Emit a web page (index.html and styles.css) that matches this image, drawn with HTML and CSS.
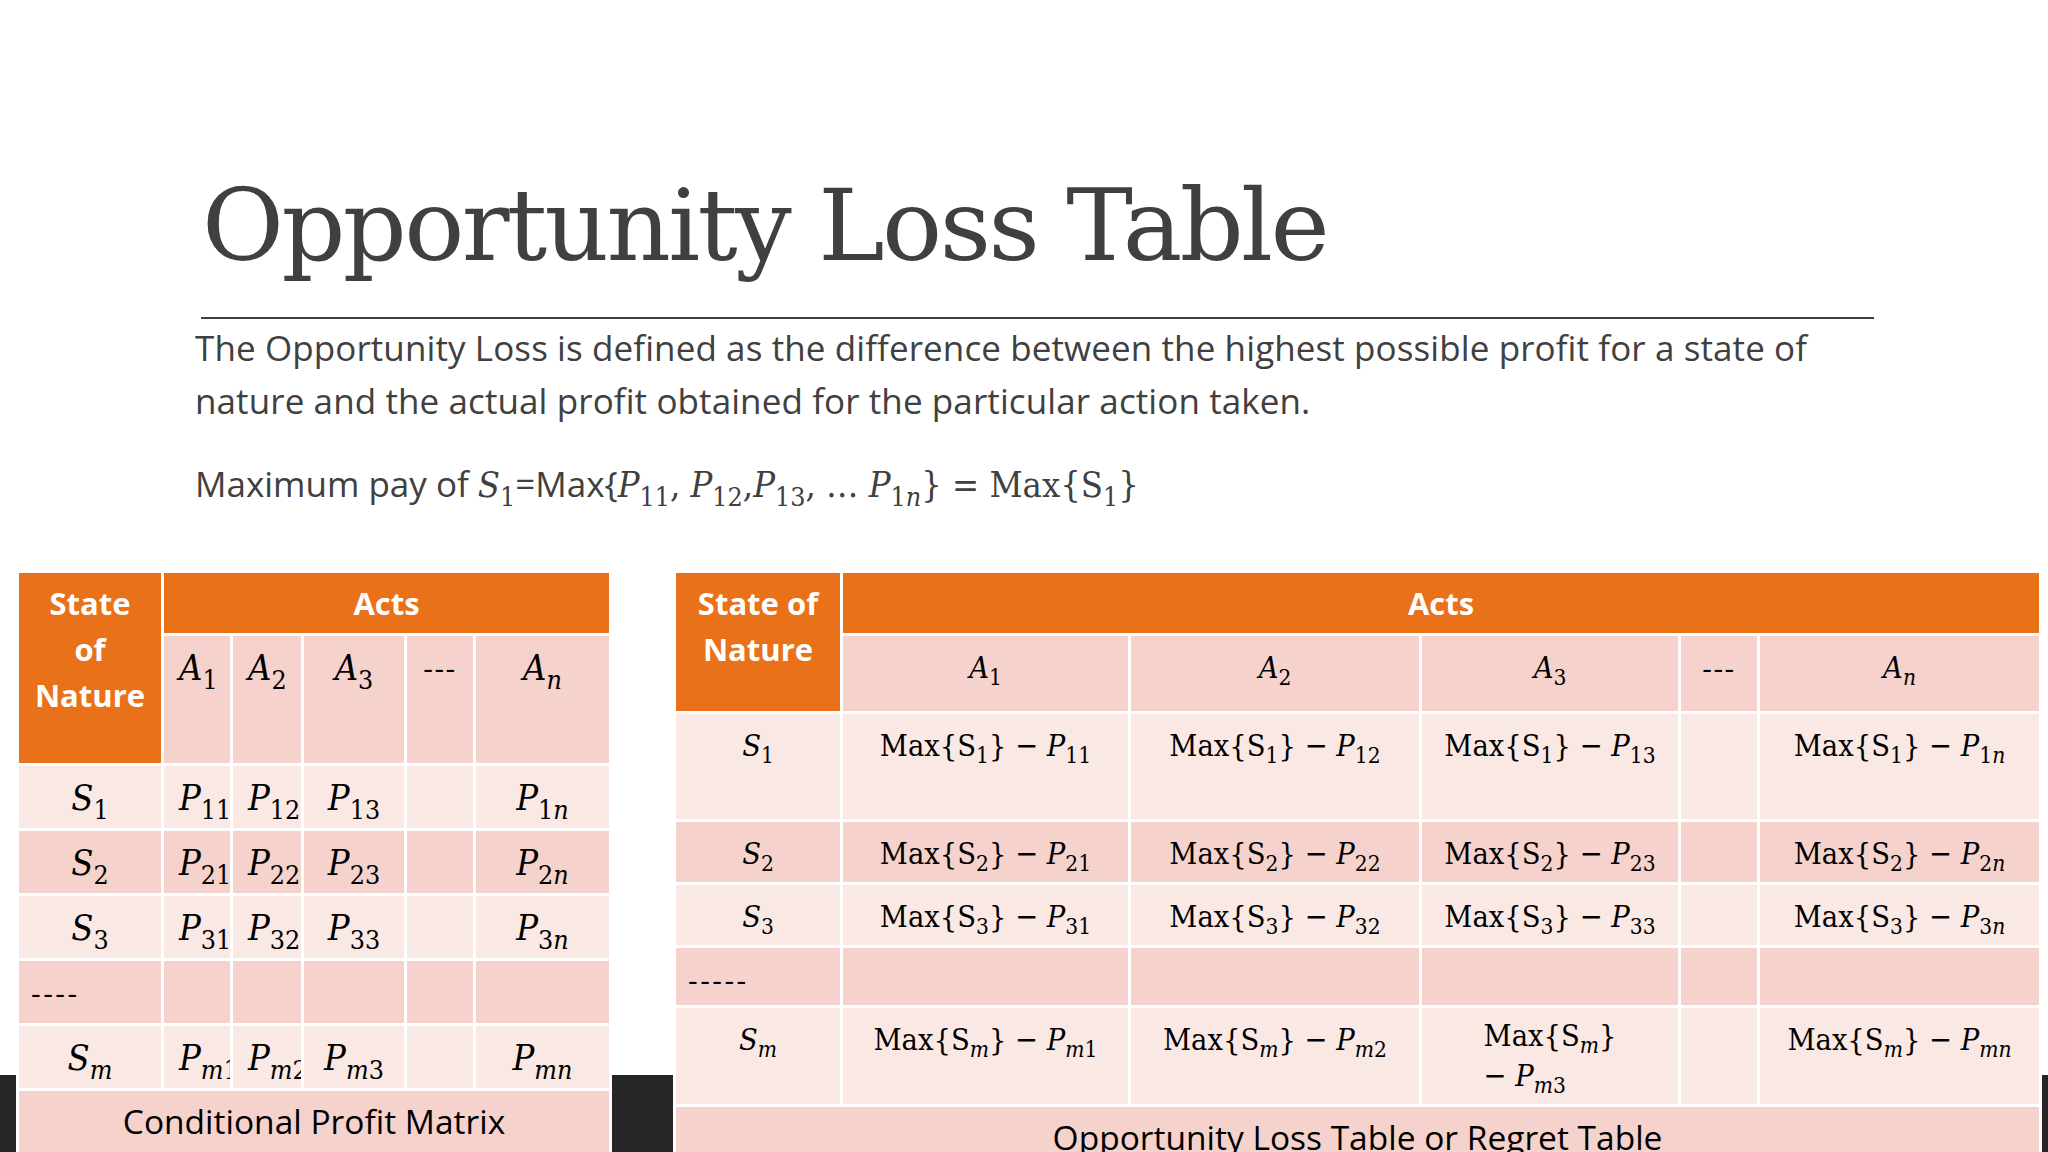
FILE: index.html
```html
<!DOCTYPE html>
<html lang="en">
<head>
<meta charset="utf-8">
<title>Opportunity Loss Table</title>
<link rel="stylesheet" href="styles.css">
</head>
<body>
<div class="slide">
  <div class="footer-bar"></div>
  <div class="top">
    <h1 class="title">Opportunity Loss Table</h1>
    <div class="rule"></div>
    <p class="para">The Opportunity Loss is defined as the difference between the highest possible profit for a state of nature and the actual profit obtained for the particular action taken.</p>
    <p class="formula">Maximum pay of <span class="m"><i>S</i><sub>1</sub></span>=Max{<span class="m"><i>P</i><sub>11</sub>, <i>P</i><sub>12</sub>,<i>P</i><sub>13</sub>, … <i>P</i><sub>1<i>n</i></sub>} = Max{S<sub>1</sub>}</span></p>
  </div>

  <div class="tables">
    <div class="tbl-wrap left-wrap">
      <div class="grid left-grid">
        <div class="c hd state">State<br>of<br>Nature</div>
        <div class="c hd acts">Acts</div>
        <div class="c dk m"><i>A</i><sub>1</sub></div>
        <div class="c dk m"><i>A</i><sub>2</sub></div>
        <div class="c dk m"><i>A</i><sub>3</sub></div>
        <div class="c dk dash">---</div>
        <div class="c dk m"><i>A</i><sub><i>n</i></sub></div>

        <div class="c lt m"><i>S</i><sub>1</sub></div>
        <div class="c lt m"><i>P</i><sub>11</sub></div>
        <div class="c lt m"><i>P</i><sub>12</sub></div>
        <div class="c lt m"><i>P</i><sub>13</sub></div>
        <div class="c lt"></div>
        <div class="c lt m"><i>P</i><sub>1<i>n</i></sub></div>

        <div class="c dk m"><i>S</i><sub>2</sub></div>
        <div class="c dk m"><i>P</i><sub>21</sub></div>
        <div class="c dk m"><i>P</i><sub>22</sub></div>
        <div class="c dk m"><i>P</i><sub>23</sub></div>
        <div class="c dk"></div>
        <div class="c dk m"><i>P</i><sub>2<i>n</i></sub></div>

        <div class="c lt m"><i>S</i><sub>3</sub></div>
        <div class="c lt m"><i>P</i><sub>31</sub></div>
        <div class="c lt m"><i>P</i><sub>32</sub></div>
        <div class="c lt m"><i>P</i><sub>33</sub></div>
        <div class="c lt"></div>
        <div class="c lt m"><i>P</i><sub>3<i>n</i></sub></div>

        <div class="c dk dots">----</div>
        <div class="c dk"></div>
        <div class="c dk"></div>
        <div class="c dk"></div>
        <div class="c dk"></div>
        <div class="c dk"></div>

        <div class="c lt m"><i>S</i><sub><i>m</i></sub></div>
        <div class="c lt m"><i>P</i><sub><i>m</i>1</sub></div>
        <div class="c lt m"><i>P</i><sub><i>m</i>2</sub></div>
        <div class="c lt m"><i>P</i><sub><i>m</i>3</sub></div>
        <div class="c lt"></div>
        <div class="c lt m"><i>P</i><sub><i>mn</i></sub></div>

        <div class="c dk caption">Conditional Profit Matrix</div>
      </div>
    </div>

    <div class="tbl-wrap right-wrap">
      <div class="grid right-grid">
        <div class="c hd state">State of<br>Nature</div>
        <div class="c hd acts">Acts</div>
        <div class="c dk m"><i>A</i><sub>1</sub></div>
        <div class="c dk m"><i>A</i><sub>2</sub></div>
        <div class="c dk m"><i>A</i><sub>3</sub></div>
        <div class="c dk dash">---</div>
        <div class="c dk m"><i>A</i><sub><i>n</i></sub></div>

        <div class="c lt m"><i>S</i><sub>1</sub></div>
        <div class="c lt m">Max{S<sub>1</sub>} − <i>P</i><sub>11</sub></div>
        <div class="c lt m">Max{S<sub>1</sub>} − <i>P</i><sub>12</sub></div>
        <div class="c lt m">Max{S<sub>1</sub>} − <i>P</i><sub>13</sub></div>
        <div class="c lt"></div>
        <div class="c lt m">Max{S<sub>1</sub>} − <i>P</i><sub>1<i>n</i></sub></div>

        <div class="c dk m"><i>S</i><sub>2</sub></div>
        <div class="c dk m">Max{S<sub>2</sub>} − <i>P</i><sub>21</sub></div>
        <div class="c dk m">Max{S<sub>2</sub>} − <i>P</i><sub>22</sub></div>
        <div class="c dk m">Max{S<sub>2</sub>} − <i>P</i><sub>23</sub></div>
        <div class="c dk"></div>
        <div class="c dk m">Max{S<sub>2</sub>} − <i>P</i><sub>2<i>n</i></sub></div>

        <div class="c lt m"><i>S</i><sub>3</sub></div>
        <div class="c lt m">Max{S<sub>3</sub>} − <i>P</i><sub>31</sub></div>
        <div class="c lt m">Max{S<sub>3</sub>} − <i>P</i><sub>32</sub></div>
        <div class="c lt m">Max{S<sub>3</sub>} − <i>P</i><sub>33</sub></div>
        <div class="c lt"></div>
        <div class="c lt m">Max{S<sub>3</sub>} − <i>P</i><sub>3<i>n</i></sub></div>

        <div class="c dk dots">-----</div>
        <div class="c dk"></div>
        <div class="c dk"></div>
        <div class="c dk"></div>
        <div class="c dk"></div>
        <div class="c dk"></div>

        <div class="c lt m"><i>S</i><sub><i>m</i></sub></div>
        <div class="c lt m">Max{S<sub><i>m</i></sub>} − <i>P</i><sub><i>m</i>1</sub></div>
        <div class="c lt m">Max{S<sub><i>m</i></sub>} − <i>P</i><sub><i>m</i>2</sub></div>
        <div class="c lt m"><span class="wrap2">Max{S<sub><i>m</i></sub>}<br>− <i>P</i><sub><i>m</i>3</sub></span></div>
        <div class="c lt"></div>
        <div class="c lt m">Max{S<sub><i>m</i></sub>} − <i>P</i><sub><i>mn</i></sub></div>

        <div class="c dk caption">Opportunity Loss Table or Regret Table</div>
      </div>
    </div>
  </div>
</div>
</body>
</html>
```

FILE: styles.css
```css
html, body {
  margin: 0;
  padding: 0;
  background: #ffffff;
}

.slide {
  position: relative;
  width: 2048px;
  height: 1152px;
  overflow: hidden;
  background: #ffffff;
  font-family: "Open Sans", "Liberation Sans", sans-serif;
}

.footer-bar {
  position: absolute;
  left: 0;
  right: 0;
  bottom: 0;
  height: 77px;
  background: #262626;
  z-index: 0;
}

.top {
  box-sizing: border-box;
  height: 570px;
  padding: 176px 0 0 195px;
  color: #404040;
}

.title {
  margin: 0 0 0 7px;
  font-family: "DejaVu Serif", "Liberation Serif", serif;
  font-weight: normal;
  font-size: 100px;
  line-height: 100px;
  letter-spacing: -2.6px;
  color: #404040;
  white-space: nowrap;
}

.rule {
  margin: 41px 0 0 6px;
  width: 1673px;
  height: 2px;
  background: #404040;
}

.para {
  margin: 2px 0 0 0;
  width: 1720px;
  font-size: 35px;
  letter-spacing: 0.1px;
  line-height: 53px;
}

.formula {
  margin: 30px 0 0 0;
  font-size: 35px;
  line-height: 53px;
  white-space: nowrap;
}

.m {
  font-family: "DejaVu Serif Condensed", "DejaVu Serif", "Liberation Serif", serif;
  font-stretch: condensed;
}

.formula .m {
  font-size: 36px;
}

.m i {
  font-style: italic;
}

sub {
  font-size: 0.74em;
  vertical-align: -0.32em;
  line-height: 0;
}

.tables {
  position: relative;
  z-index: 1;
  display: flex;
  align-items: flex-start;
  gap: 61px;
  padding-left: 16px;
}

.tbl-wrap {
  background: #ffffff;
  padding: 3px;
}

.grid {
  display: grid;
  gap: 3px;
  background: #ffffff;
}

.left-grid {
  grid-template-columns: 142px 66px 68px 100px 66px 133px;
  grid-template-rows: 60px 127px 62px 62px 62px 62px 62px 70px;
}

.right-grid {
  grid-template-columns: 164px 285px 288px 256px 76px 279px;
  grid-template-rows: 60px 75px 105px 60px 60px 57px 96px 70px;
}

.c {
  box-sizing: border-box;
  padding: 8px 15px 0 15px;
  text-align: center;
  line-height: 48px;
  white-space: nowrap;
  overflow: hidden;
  color: #000000;
  font-size: 36px;
}

.right-grid .c.m {
  font-size: 30.5px;
}

.hd {
  background: #e97119;
  color: #ffffff;
  font-weight: bold;
  font-size: 31px;
  line-height: 46px;
  padding-top: 7px;
}

.state {
  grid-row: 1 / 3;
  white-space: normal;
  padding-left: 6px;
  padding-right: 6px;
}

.acts {
  grid-column: 2 / 7;
}

.lt {
  background: #fae8e5;
}

.dk {
  background: #f5d2cb;
}

.dash {
  font-size: 30px;
  letter-spacing: 1.5px;
}

.dots {
  text-align: left;
  padding-left: 12px;
  font-size: 30px;
  letter-spacing: 2.5px;
}

.caption {
  grid-column: 1 / 7;
  font-size: 33.5px;
  padding-top: 6px;
}

.wrap2 {
  display: inline-block;
  text-align: left;
  line-height: 40px;
  white-space: nowrap;
}
```
